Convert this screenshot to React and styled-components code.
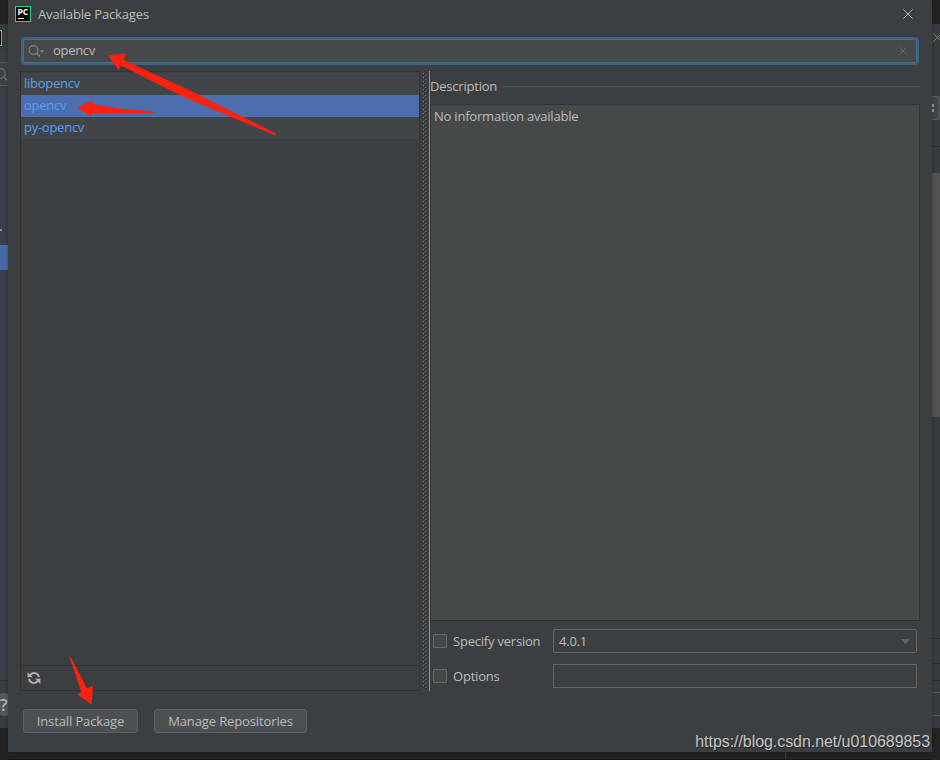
import { useState } from 'react';
import styled, { createGlobalStyle, css } from 'styled-components';

const packages = ['libopencv', 'opencv', 'py-opencv'];

// slices of the settings window that stick out on both sides of the dialog
const leftSlices = [
  { h: 24, bg: '#222324' },
  { h: 28, bg: '#393c3e', kind: 'logo' },
  { h: 10, bg: '#393d45' },
  { h: 24, bg: '#3e4143', kind: 'search' },
  { h: 159, bg: '#3a3f48', kind: 'tree' },
  { h: 25, bg: '#486aa9' },
  { h: 410, bg: '#3a3f48' },
  { h: 48, bg: '#393c3e', kind: 'help', line: '#2c2e2f' },
  { h: 32, bg: '#232324' },
];

const rightSlices = [
  { h: 24, bg: '#222222' },
  { h: 72, bg: '#393c3e', kind: 'close' },
  { h: 24, bg: '#434749', kind: 'button' },
  { h: 26, bg: '#393c3e' },
  { h: 27, bg: '#393c3e', line: '#2c2e2f' },
  { h: 244, bg: '#525454' },
  { h: 221, bg: '#393c3e' },
  { h: 25, bg: '#393c3e', line: '#2c2e2f' },
  { h: 17, bg: '#393c3e', line: '#2c2e2f' },
  { h: 12, bg: '#393c3e', line: '#2c2e2f' },
  { h: 23, bg: '#393c3e', line: '#555859' },
  { h: 13, bg: '#393c3e', line: '#555859' },
  { h: 32, bg: '#242424' },
];

const Logo = () => (
  <svg width="16" height="16" viewBox="0 0 16 16">
    <rect width="16" height="16" fill="#21d789" />
    <rect x="1" y="1" width="14" height="14" fill="#080808" />
    <text
      x="2.4"
      y="8.6"
      fill="#fff"
      fontSize="8"
      fontWeight="700"
      fontFamily="Open Sans, sans-serif"
      letterSpacing="0"
      textLength="11"
      lengthAdjust="spacingAndGlyphs"
    >
      PC
    </text>
    <rect x="3" y="12" width="6" height="1" fill="#fff" />
  </svg>
);

const Cross = ({ size, color }) => (
  <svg width={size} height={size} viewBox="0 0 10 10">
    <path d="M.4.4l9.2 9.2M9.6.4L.4 9.6" stroke={color} fill="none" />
  </svg>
);

const Magnifier = () => (
  <svg width="17" height="12" viewBox="0 0 17 12">
    <g fill="none" stroke="#7b8082">
      <circle cx="5.5" cy="5" r="4.4" strokeWidth="1.2" />
      <path d="M8.6 8.4l3.2 3" strokeWidth="1.5" />
    </g>
    <path d="M11.500 5.300h5l-2.500 2.700z" fill="#7b8082" />
  </svg>
);

const Refresh = () => (
  <svg width="14" height="14" viewBox="0 0 14 14">
    <g fill="none" stroke="#afb1b3" strokeWidth="2">
      <path d="M3 4.2A5 5 0 0 1 12 6" />
      <path d="M11 9.8A5 5 0 0 1 2 8" />
    </g>
    <path d="M.6 1v5.200h5.200zM13.400 13V7.800H8.200z" fill="#afb1b3" />
  </svg>
);

const Slice = ({ kind, ...rest }) => (
  <SliceBox {...rest}>
    {kind === 'logo' && <LogoEdge />}
    {kind === 'search' && (
      <SearchEdge>
        <svg width="8" height="14" viewBox="5 0 8 14">
          <circle cx="5.5" cy="5.5" r="4.8" fill="none" stroke="#777b7d" />
          <path d="M9 9l3 3.3" stroke="#777b7d" strokeWidth="1.4" />
        </svg>
      </SearchEdge>
    )}
    {kind === 'tree' && <TreeEdge />}
    {kind === 'help' && <HelpEdge>?</HelpEdge>}
    {kind === 'close' && (
      <CloseEdge>
        <Cross size={9} color="#8c8e8f" />
      </CloseEdge>
    )}
    {kind === 'button' && <ButtonEdge />}
  </SliceBox>
);

const App = () => {
  const [query, setQuery] = useState('opencv');
  const [selected, setSelected] = useState('opencv');

  return (
    <Screen>
      <GlobalStyle />
      <Strip>
        {leftSlices.map((slice, i) => (
          <Slice key={i} {...slice} />
        ))}
      </Strip>
      <Center>
        <Dialog>
          <TitleBar>
            <Logo />
            <Title>Available Packages</Title>
            <Cross size={10} color="#b4b6b7" />
          </TitleBar>
          <SearchBox>
            <Magnifier />
            <SearchInput
              value={query}
              onChange={(e) => setQuery(e.target.value)}
            />
            <Cross size={8} color="#65777b" />
          </SearchBox>
          <Body>
            <ListPanel>
              <List>
                {packages.map((name) => (
                  <Row
                    key={name}
                    $active={name === selected}
                    onClick={() => setSelected(name)}
                  >
                    {name}
                  </Row>
                ))}
              </List>
              <ListFooter>
                <Refresh />
              </ListFooter>
            </ListPanel>
            <Splitter />
            <Details>
              <Legend>
                <LegendText>Description</LegendText>
              </Legend>
              <Description>No information available</Description>
              <Options>
                <Check />
                <Label>Specify version</Label>
                <Field $rounded>
                  4.0.1
                  <svg width="9" height="5" viewBox="0 0 9 5">
                    <path d="M0 0h9L4.5 5z" fill="#626466" />
                  </svg>
                </Field>
                <Check />
                <Label>Options</Label>
                <Field />
              </Options>
            </Details>
          </Body>
          <Actions>
            <Button $width={115}>Install Package</Button>
            <Button $width={153}>Manage Repositories</Button>
          </Actions>
        </Dialog>
        <Taskbar />
      </Center>
      <Strip>
        {rightSlices.map((slice, i) => (
          <Slice key={i} {...slice} />
        ))}
      </Strip>
      <Arrows viewBox="0 0 940 760">
        <path d="M108 55.5L126 53.5 123.500 60 188 89.500 276 133.500 275 135.200 187 98.500 121 65.500 118.500 70z" />
        <path d="M77.500 107.500L93 100 91.500 104 120 108.500 154 111.500V113L120 113.500 91 113 92.500 117.500z" />
        <path d="M69.500 657L71 657.500 87 688.500 93 686 91.500 704.500 77 694 81.500 692.500z" />
      </Arrows>
      <Watermark>https://blog.csdn.net/u010689853</Watermark>
    </Screen>
  );
};

const GlobalStyle = createGlobalStyle`
  *,
  *::before,
  *::after {
    box-sizing: border-box;
  }
  body {
    margin: 0;
    background: #222;
    font-family: 'Open Sans', 'Noto Sans', sans-serif;
    font-size: 13px;
    letter-spacing: -0.21px;
    color: #bbbbbb;
  }
  svg {
    display: block;
    flex: none;
  }
`;

const Screen = styled.div`
  position: relative;
  display: flex;
  width: 940px;
  height: 760px;
  overflow: hidden;
`;

const Strip = styled.div`
  display: flex;
  flex-direction: column;
  flex: none;
  width: 8px;
`;

const SliceBox = styled.div`
  flex: none;
  display: flex;
  height: ${({ h }) => h}px;
  background: ${({ bg }) => bg};
  overflow: hidden;
  ${({ line }) =>
    line &&
    css`
      border-top: 1px solid ${line};
    `}
`;

const LogoEdge = styled.div`
  width: 2px;
  height: 16px;
  margin-top: 6px;
  background: #080808;
  border: 1px solid #21d789;
  border-left: none;
`;

const SearchEdge = styled.div`
  width: 8px;
  padding-top: 5px;
  border: 1px solid #565859;
  border-width: 1px 0;
`;

const TreeEdge = styled.div`
  width: 2px;
  height: 2px;
  margin-top: 143px;
  background: #8f9193;
`;

const HelpEdge = styled.div`
  flex: none;
  width: 23px;
  height: 23px;
  margin: 12px 0 0 -7px;
  padding-left: 7px;
  border-radius: 50%;
  background: #55595b;
  color: #b4b6b7;
  font-size: 17px;
  font-weight: 600;
  line-height: 23px;
`;

const CloseEdge = styled.div`
  margin: 9px 0 0 1px;
`;

const ButtonEdge = styled.div`
  width: 8px;
  border: 1px solid #565a5c;
  border-left: none;
  border-radius: 0 3px 3px 0;
  &::before {
    content: '';
    display: block;
    width: 2px;
    height: 8px;
    margin-top: 7px;
    border: 2px solid #9a9c9d;
    border-width: 3px 0;
  }
`;

const Center = styled.div`
  flex: none;
  width: 924px;
  display: flex;
  flex-direction: column;
`;

const Dialog = styled.div`
  height: 752px;
  display: flex;
  flex-direction: column;
  background: #3c3f41;
  box-shadow: 0 0 4px rgba(0, 0, 0, 0.3);
  z-index: 1;
`;

const Taskbar = styled.div`
  height: 8px;
  background: #222222;
  border-bottom: 1px solid #1c1516;
  &::before {
    content: '';
    display: block;
    width: 1px;
    height: 7px;
    margin-left: 777px;
    background: #3a3a3a;
  }
`;

const TitleBar = styled.div`
  display: flex;
  align-items: center;
  height: 37px;
  padding: 0 19px 9px 7px;
`;

const Title = styled.span`
  flex: 1;
  margin-left: 7px;
  letter-spacing: -0.14px;
`;

const SearchBox = styled.div`
  display: flex;
  align-items: center;
  height: 28px;
  margin: 0 13px;
  padding: 0 10px 0 5px;
  background: #45494a;
  border: 2px solid #3d6185;
  border-radius: 4px;
  box-shadow: inset 0 0 0 1px #466d94;
`;

const SearchInput = styled.input`
  flex: 1;
  padding: 0 0 2px;
  margin-left: 8px;
  background: none;
  border: none;
  outline: none;
  color: #bbbbbb;
  font: inherit;
  letter-spacing: -0.3px;
`;

const Body = styled.div`
  display: flex;
  height: 620px;
  margin: 6px 12px 0;
`;

const ListPanel = styled.div`
  display: flex;
  flex-direction: column;
  width: 400px;
  border: 1px solid #323232;
`;

const List = styled.div`
  flex: 1;
  padding-top: 1px;
`;

const Row = styled.div`
  height: 22px;
  padding-left: 3px;
  line-height: 21px;
  letter-spacing: -0.26px;
  color: #589df6;
  background: ${({ $active }) => ($active ? '#4b6eaf' : '#414547')};
`;

const ListFooter = styled.div`
  display: flex;
  align-items: center;
  height: 25px;
  padding-left: 6px;
  border-top: 1px solid #323232;
`;

const dot = (color) =>
  `conic-gradient(from 270deg at 1px 1px, ${color} 90deg, transparent 0)`;

const Splitter = styled.div`
  width: 10px;
  border-right: 1px solid #87939a;
  &::before {
    content: '';
    display: block;
    width: 5px;
    height: 616px;
    margin: 2px 0 0 3px;
    background: ${dot('#777a7b')} 0 0 / 4px 4px repeat-y,
      ${dot('#777a7b')} 2px 2px / 4px 4px repeat-y,
      ${dot('#2b2d2e')} 1px 1px / 4px 4px repeat-y,
      ${dot('#2b2d2e')} 3px 3px / 4px 4px repeat-y;
  }
`;

const Details = styled.div`
  display: flex;
  flex-direction: column;
  width: 490px;
`;

const Legend = styled.div`
  display: flex;
  align-items: center;
  height: 33px;
  padding-bottom: 2px;
  &::after {
    content: '';
    flex: 1;
    height: 1px;
    margin-left: 6px;
    background: #555555;
  }
`;

const LegendText = styled.span`
  padding-bottom: 2px;
`;

const Label = styled.span`
  padding-left: 6px;
`;

const Description = styled.div`
  height: 517px;
  padding: 2px 3px;
  background: #45494a;
  border: 1px solid #323232;
`;

const Options = styled.div`
  display: grid;
  grid-template-columns: 14px 106px 364px;
  grid-template-rows: 24px 24px;
  align-items: center;
  row-gap: 11px;
  padding: 8px 0 0 3px;
`;

const Check = styled.div`
  width: 14px;
  height: 14px;
  background: #43494a;
  border: 1px solid #6b6b6b;
  border-radius: 1px;
`;

const Field = styled.div`
  display: flex;
  align-items: center;
  justify-content: space-between;
  height: 24px;
  padding: 0 6px 0 5px;
  border: 1px solid #646464;
  border-radius: ${({ $rounded }) => ($rounded ? '2px' : '0')};
`;

const Actions = styled.div`
  display: flex;
  gap: 16px;
  padding: 18px 15px;
`;

const Button = styled.button`
  width: ${({ $width }) => $width}px;
  height: 24px;
  padding: 0;
  background: #4c5052;
  border: 1px solid #5e6162;
  border-radius: 3px;
  color: #bbbbbb;
  font: inherit;
  letter-spacing: -0.12px;
`;

const Arrows = styled.svg`
  position: absolute;
  inset: 0;
  z-index: 2;
  fill: #ff2010;
  pointer-events: none;
`;

const Watermark = styled.div`
  position: absolute;
  right: 10px;
  bottom: 9px;
  z-index: 2;
  color: #c4c5c5;
  font: 16px/18px 'Liberation Sans', sans-serif;
  letter-spacing: -0.06px;
  text-shadow: 1px 1px 1px rgba(0, 0, 0, 0.4);
`;

export default App;
